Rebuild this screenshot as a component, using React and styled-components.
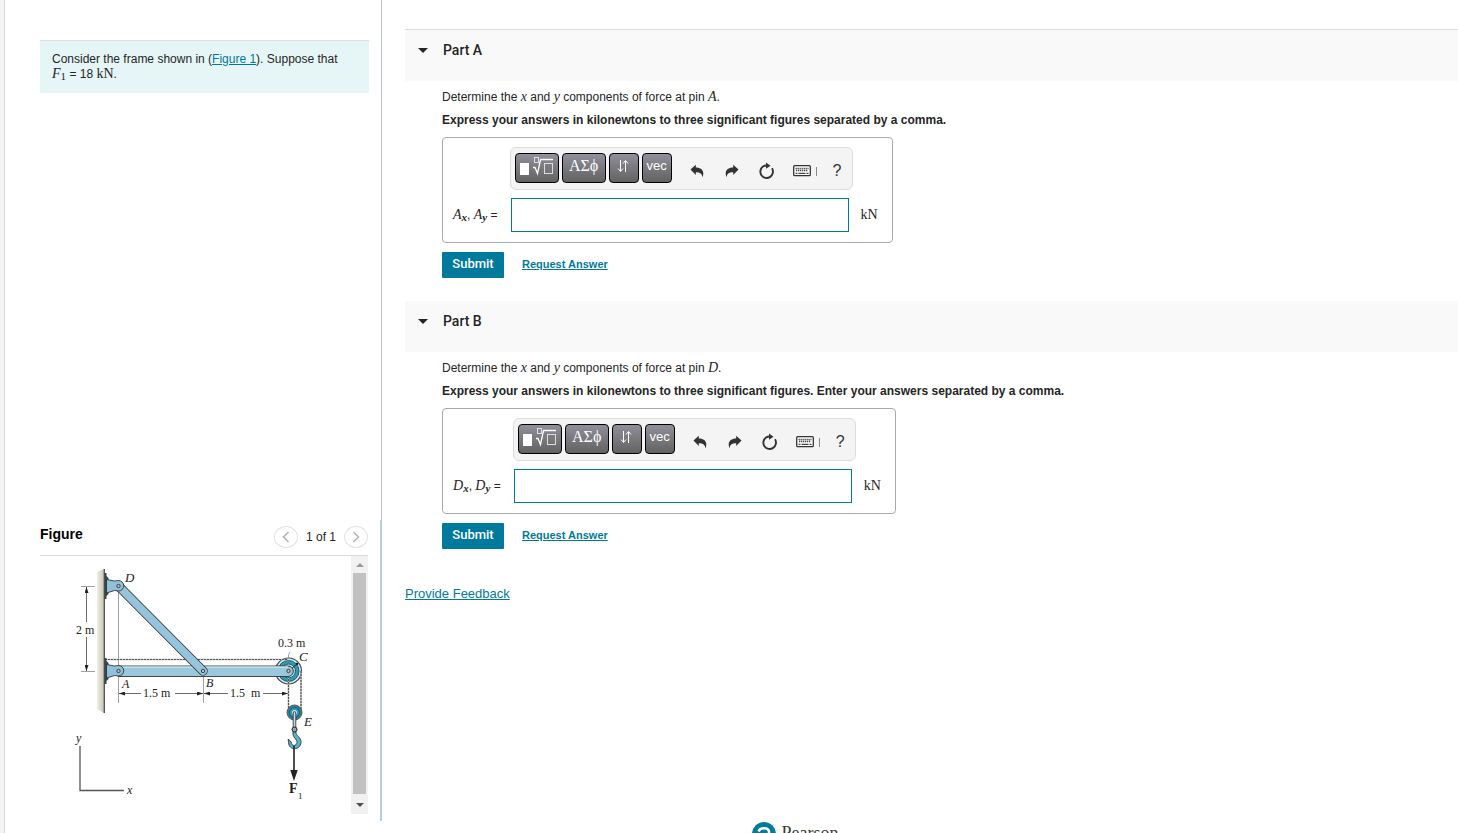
import React, { useState } from "react"
import styled, { createGlobalStyle } from "styled-components"

const GlobalStyle = createGlobalStyle`
  * {
    box-sizing: border-box;
  }
  body {
    margin: 0;
    background: #fff;
    color: #252525;
    font-family: "Liberation Sans", Arial, sans-serif;
    font-size: 12px;
    line-height: 15px;
  }
  a {
    color: #007a9c;
  }
  button {
    font-family: inherit;
    padding: 0;
    cursor: pointer;
  }
`

const Page = styled.div`
  display: flex;
  height: 100vh;
  overflow: hidden;
`

const Rail = styled.div`
  flex: none;
  width: 5px;
  background: #f4f4f4;
  border-right: 1px solid #d9d9d9;
`

const Sidebar = styled.aside`
  display: flex;
  flex-direction: column;
  flex: none;
  width: 377px;
  padding-bottom: 12px;
`

const ProblemPane = styled.div`
  flex: 1;
  padding: 40px 12px 0 35px;
  border-right: 1px solid #bcc3cc;
`

const Problem = styled.div`
  padding: 11px 12px;
  border-top: 1px solid #dcdfdf;
  background: #e6f6f6;
  p {
    margin: 0;
  }
`

const FigurePane = styled.section`
  padding: 6px 12px 7px 35px;
  border-right: 2px solid #b9cde0;
`

const FigureHeader = styled.header`
  display: flex;
  justify-content: space-between;
  padding-bottom: 7px;
  border-bottom: 1px solid #dcdcdc;
  h2 {
    margin: 0;
    color: #000;
    font-size: 14px;
    line-height: 16px;
  }
`

const Pager = styled.div`
  display: flex;
  align-items: center;
  gap: 8px;
`

const PageButton = styled.button`
  display: flex;
  align-items: center;
  justify-content: center;
  width: 24px;
  height: 22px;
  border: 1px solid #e2e2e2;
  border-radius: 50%;
  background: #fff;
`

const FigureBody = styled.div`
  display: flex;
  svg.frame {
    flex: 1;
    min-width: 0;
    height: 258px;
  }
`

const ScrollTrack = styled.div`
  display: flex;
  flex-direction: column;
  align-items: center;
  justify-content: space-between;
  width: 17px;
  padding: 7px 0;
  background: #f1f1f1;
`

const ScrollThumb = styled.div`
  flex: 1;
  width: 13px;
  margin: 6px 0 9px;
  background: #c1c1c1;
`

const Triangle = styled.span`
  border: solid transparent;
  border-width: ${props => (props.$up ? "0 4px 4px" : "4px 4px 0")};
  border-${props => (props.$up ? "bottom" : "top")}-color: ${props => props.$color};
`

const Caret = styled(Triangle)`
  border-width: 5px 5px 0;
`

const Main = styled.main`
  flex: 1;
  min-width: 0;
  padding: 29px 0 0 23px;
`

const Parts = styled.div`
  border-top: 1px solid #dcdcdc;
`

const PartHeader = styled.header`
  height: 51px;
  padding: 12px 13px;
  background: #f9f9f9;
  h2 {
    margin: 0;
    font-size: 14px;
    line-height: 16px;
  }
  button {
    display: flex;
    align-items: center;
    gap: 15px;
    border: 0;
    background: none;
    color: #252525;
    font-family: Roboto, "Liberation Sans", sans-serif;
    font-size: 14px;
    font-weight: 500;
    line-height: 16px;
  }
`

const PartBody = styled.div`
  padding: 9px 24px 23px 37px;
  p {
    margin: 0 0 8px;
  }
  p + p {
    margin-bottom: 9px;
    font-weight: bold;
  }
`

const Sym = styled.i`
  font-family: "Liberation Serif", "Times New Roman", serif;
  font-size: 14px;
  line-height: 1;
  sub {
    font-size: 11px;
    font-weight: bold;
    line-height: 1;
    vertical-align: -2px;
  }
`

const Upright = styled.span`
  font-family: "Liberation Serif", "Times New Roman", serif;
  font-size: 14px;
  line-height: 1;
`

const Subscript = styled.sub`
  font-family: "Liberation Serif", "Times New Roman", serif;
  font-size: 11px;
  line-height: 1;
  vertical-align: -2px;
`

const AnswerBox = styled.div`
  display: grid;
  grid-template-columns: auto auto auto;
  align-items: center;
  width: fit-content;
  padding: 9px 14px 10px 10px;
  border: 1px solid #aaa;
  border-radius: 4px;
  row-gap: 8px;
`

const Toolbar = styled.div`
  grid-column: 2 / 4;
  display: flex;
  gap: 3px;
  justify-self: start;
  width: 343px;
  height: 43px;
  padding: 5px 4px;
  border: 1px solid #ddd;
  border-radius: 6px;
  background: #f4f4f4;
`

const PaletteButton = styled.button`
  flex: none;
  width: ${props => (props.$wide ? 44 : 30)}px;
  height: 30px;
  padding-bottom: 5px;
  border: 1px solid #000;
  border-radius: 4px;
  background: linear-gradient(#918f9a, #626262);
  color: #fff;
  font-family: ${props => (props.$serif ? '"Liberation Serif", serif' : "inherit")};
  font-size: ${props => (props.$serif ? 16 : 13)}px;
  line-height: 18px;
  svg {
    display: block;
    margin: 0 auto;
  }
`

const ToolGroup = styled.div`
  display: flex;
  margin-left: 5px;
`

const ToolButton = styled.button`
  display: flex;
  flex: none;
  align-items: center;
  justify-content: center;
  width: ${props => props.$width || 35}px;
  height: 30px;
  padding-top: 6px;
  border: 0;
  background: none;
  color: #333;
  font-size: 16px;
`

const AnswerLabel = styled.label`
  padding-right: 12px;
`

const AnswerInput = styled.input`
  width: 338px;
  height: 34px;
  margin-left: 1px;
  padding: 0 8px;
  border: 1px solid #007a9c;
  background: #fff;
  font-size: 14px;
`

const Unit = styled(Upright)`
  padding-left: 12px;
`

const Actions = styled.div`
  display: flex;
  align-items: center;
  gap: 18px;
  margin-top: 9px;
  a {
    padding-bottom: 2px;
    font-size: 11px;
    font-weight: bold;
  }
`

const SubmitButton = styled.button`
  width: 62px;
  height: 26px;
  padding-bottom: 3px;
  border: 0;
  border-radius: 1px;
  background: #007a9c;
  color: #fff;
  font-family: Roboto, "Liberation Sans", sans-serif;
  font-size: 13px;
  font-weight: 500;
`

const Feedback = styled.a`
  display: block;
  width: fit-content;
  margin-top: 14px;
  font-size: 13px;
`

const Footer = styled.footer`
  display: flex;
  gap: 5px;
  margin: 221px 0 0 33%;
  color: #3a3a32;
  font-family: "Liberation Serif", "Times New Roman", serif;
  font-size: 18px;
  line-height: 22px;
`

const TemplateIcon = () => (
  <svg width="34" height="20" viewBox="0 0 34 20" fill="none" stroke="#ddd">
    <rect x="0" y="7" width="9" height="12" fill="#fff" stroke="none" />
    <rect x="14.5" y="1.5" width="4" height="5" />
    <path d="M13 11.5h2l2.5 6L20.5 3.5H33" stroke="#fff" strokeWidth="1.3" />
    <rect x="24.5" y="7.5" width="8" height="10" />
  </svg>
)

const UpDownIcon = () => (
  <svg width="14" height="14" viewBox="0 0 14 14" fill="none" stroke="#fff">
    <path d="M3.5 1v11M1 9.5l2.5 3 2.5-3M8.500 13V2M6 4.5l2.5-3 2.5 3" />
  </svg>
)

const ArrowIcon = ({ redo }) => (
  <svg width="14" height="14" viewBox="0 0 14 14" fill="#333">
    <path
      transform={redo ? "matrix(-1 0 0 1 14 0)" : undefined}
      d="M.5 5.500 5.800.8v2.800c4.600 0 7.500 2.200 7.500 6 0 1.500-.4 2.800-1.100 3.700.1-3.400-2-5-6.400-5v2.700z"
    />
  </svg>
)

const ResetIcon = () => (
  <svg width="18" height="18" viewBox="0 0 18 18" fill="none">
    <path d="M14 6.300A6.300 6.300 0 1 1 5 4.500Q7 3.200 9.500 3.500" stroke="#333" strokeWidth="1.900" />
    <path d="M8 .5l4.500 3.200-4.500 3z" fill="#333" />
  </svg>
)

const KeyboardIcon = () => (
  <svg width="25" height="12" viewBox="0 0 25 12">
    <rect x=".7" y=".7" width="16.600" height="10" rx="1" fill="#fff" stroke="#333" strokeWidth="1.300" />
    <path d="M2.500 3.500h13M3 5.500h12" stroke="#444" strokeWidth="1.300" strokeDasharray="1.300 .7" />
    <path d="M2.500 8.300h2M5.500 8.300h7M13.500 8.300h2" stroke="#444" strokeWidth="1.200" />
    <path d="M23.500 2v9" stroke="#888" />
  </svg>
)

const Chevron = ({ right }) => (
  <svg width="8" height="12" viewBox="0 0 8 12" fill="none" stroke="#b5b5b5" strokeWidth="1.600">
    <path d={right ? "M1.500 1l5 5-5 5" : "M6.500 1l-5 5 5 5"} />
  </svg>
)

const PearsonMark = () => (
  <svg width="24" height="24" viewBox="0 0 24 24">
    <circle cx="12" cy="12" r="12" fill="#047a9c" />
    <path d="M6.500 9.500C8 5.500 16.500 5 17 9.800c.3 3.200-3 5-6 4.700" fill="none" stroke="#fff" strokeWidth="2.500" />
    <circle cx="11" cy="19" r="1.500" fill="#fff" />
  </svg>
)

const Bracket = ({ y }) => (
  <g transform={`translate(0 ${y})`}>
    <path d="M104.500-13h2v3l2 2v16l-2 2v3h-2z" fill="#35454d" />
    <path d="M106.500-6.500l8 1.500 4-.5a5 5 0 0 1 0 10.500l-4-.5-8 2.500z" fill="#8fc1da" stroke="#333" strokeWidth=".9" />
  </g>
)

const Pin = ({ x, y }) => (
  <circle cx={x} cy={y} r="1.700" fill="#b9c3c7" stroke="#333" strokeWidth=".9" />
)

const FrameDrawing = () => (
  <svg
    className="frame"
    viewBox="40 556 311 258"
    fontFamily="'Liberation Serif', serif"
    fontSize="12"
    fill="#222"
    role="img"
    aria-label="Frame with pulleys"
  >
    <defs>
      <linearGradient id="wall">
        <stop offset="0" stopColor="#f0efe6" />
        <stop offset="1" stopColor="#c6c5b3" />
      </linearGradient>
      <marker id="tip" viewBox="0 0 6 4" refX="6" refY="2" markerWidth="6" markerHeight="4" markerUnits="userSpaceOnUse" orient="auto">
        <path d="M0 0l6 2-6 2z" />
      </marker>
    </defs>

    {/* wall */}
    <path d="M97 572l7-3v144l-7-4z" fill="url(#wall)" />
    <path d="M104.300 569v144" stroke="#444" strokeWidth="1.200" />

    {/* extension and dimension lines */}
    <g stroke="#888" strokeWidth=".8">
      <path d="M118.500 590v113M203.500 677v26M288.500 684v18M81 586.500h14M81 671.500h14" />
    </g>
    <g stroke="#444" strokeWidth=".8">
      <path d="M86.500 622v-35" markerEnd="url(#tip)" />
      <path d="M86.500 637v34" markerEnd="url(#tip)" />
      <path d="M141 693.500h-22" markerEnd="url(#tip)" />
      <path d="M175 693.500h28" markerEnd="url(#tip)" />
      <path d="M228 693.500h-24" markerEnd="url(#tip)" />
      <path d="M263 693.500h25" markerEnd="url(#tip)" />
    </g>

    {/* upper pulley */}
    <circle cx="288.500" cy="671" r="13" fill="#d5eef5" stroke="#444" strokeWidth="1.200" />
    <circle cx="288.500" cy="671" r="10.500" fill="#2b9dbb" stroke="#235765" />
    <circle cx="288.500" cy="671" r="7" fill="#c4e7f0" stroke="#235765" />
    <circle cx="288.500" cy="671" r="4.500" fill="#4ba8c2" stroke="#222" />
    <path d="M290 670l8-7" stroke="#222" />
    <circle cx="297" cy="664" r="1.200" />
    <path d="M288.500 658v-3l1.500-3" fill="none" stroke="#888" strokeWidth=".8" />

    {/* rope */}
    <g fill="none" stroke="#bbb" strokeWidth="1.500">
      <path d="M105 659.500h183M288.500 676v32M301 671v40" />
      <path d="M105 659.500h183M288.500 676v32M301 671v40" stroke="#555" strokeDasharray="2 1" strokeWidth="1.200" />
    </g>

    {/* beam and brace */}
    <path d="M118 666h170a5 5 0 0 1 0 10.500H118z" fill="#9ac8dd" stroke="#333" strokeWidth=".9" />
    <path d="M118 667h170" stroke="#e6f3f8" />
    <path d="M118.500 586L203 671" stroke="#333" strokeWidth="9.500" strokeLinecap="round" />
    <path d="M118.500 586L203 671" stroke="#94c5dc" strokeWidth="7.800" strokeLinecap="round" />
    <Bracket y={671} />
    <Bracket y={586} />
    <Pin x={118.500} y={586} />
    <Pin x={118.500} y={671} />
    <Pin x={203} y={671} />
    <Pin x={288.500} y={671} />

    {/* lower pulley, hook and load */}
    <circle cx="294.500" cy="712.500" r="7.500" fill="#2f7f95" stroke="#555" />
    <circle cx="294.500" cy="712.500" r="5" fill="#299bb9" stroke="#20576a" />
    <circle cx="294.500" cy="712.500" r="2.500" fill="#d8ecf2" />
    <path d="M294.500 713v15" stroke="#333" strokeWidth="3.500" strokeLinecap="round" />
    <path d="M294.500 713v15" stroke="#c6dbe2" strokeWidth="1.800" strokeLinecap="round" />
    <circle cx="294.500" cy="729.500" r="2.500" fill="#8da7ae" stroke="#222" />
    <path
      d="M293 732h3c-.5 4 5.500 5 5 10.500-.6 8-12 8.500-12.500 0l-.3-3.500 3 3c0 4.500 5.300 4.500 5.800.5.400-3.500-5-5-4-10.500z"
      fill="#58b4ce"
      stroke="#333"
      strokeWidth=".9"
    />
    <path d="M294 746v26" stroke="#222" strokeWidth="1.600" />
    <path d="M290.300 770h7.400l-3.700 11z" />

    {/* axes */}
    <path d="M80 746v44.500h44" fill="none" stroke="#555" strokeWidth="1.300" />

    <text x="76" y="634">2 m</text>
    <text x="143" y="697">1.5 m</text>
    <text x="230" y="697">1.5&#160; m</text>
    <text x="278" y="647">0.3 m</text>
    <g fontStyle="italic">
      <text x="125" y="582" fontSize="13">D</text>
      <text x="122" y="688">A</text>
      <text x="206" y="687">B</text>
      <text x="299" y="661" fontSize="13">C</text>
      <text x="304" y="726" fontSize="13">E</text>
      <text x="76" y="742">y</text>
      <text x="127" y="794">x</text>
    </g>
    <text x="289" y="793" fontSize="14" fontWeight="bold">F</text>
    <text x="298" y="799" fontSize="9">1</text>
  </svg>
)

const parts = [
  {
    title: "Part A",
    pin: "A",
    instructions:
      "Express your answers in kilonewtons to three significant figures separated by a comma.",
  },
  {
    title: "Part B",
    pin: "D",
    instructions:
      "Express your answers in kilonewtons to three significant figures. Enter your answers separated by a comma.",
  },
]

const Part = ({ title, pin, instructions }) => {
  const [answer, setAnswer] = useState("")
  const inputId = `answer-${pin}`
  return (
    <section>
      <PartHeader>
        <h2>
          <button type="button" aria-expanded="true">
            <Caret $color="#252525" />
            {title}
          </button>
        </h2>
      </PartHeader>
      <PartBody>
        <p>
          Determine the <Sym>x</Sym> and <Sym>y</Sym> components of force at pin{" "}
          <Sym>{pin}</Sym>.
        </p>
        <p>{instructions}</p>
        <AnswerBox>
          <Toolbar>
            <PaletteButton type="button" $wide aria-label="Templates">
              <TemplateIcon />
            </PaletteButton>
            <PaletteButton type="button" $wide $serif>
              ΑΣϕ
            </PaletteButton>
            <PaletteButton type="button" aria-label="Arrows">
              <UpDownIcon />
            </PaletteButton>
            <PaletteButton type="button">vec</PaletteButton>
            <ToolGroup>
              <ToolButton type="button" aria-label="Undo">
                <ArrowIcon />
              </ToolButton>
              <ToolButton type="button" aria-label="Redo">
                <ArrowIcon redo />
              </ToolButton>
              <ToolButton type="button" aria-label="Reset">
                <ResetIcon />
              </ToolButton>
              <ToolButton type="button" $width={42} aria-label="Keyboard shortcuts">
                <KeyboardIcon />
              </ToolButton>
              <ToolButton type="button" $width={21}>
                ?
              </ToolButton>
            </ToolGroup>
          </Toolbar>
          <AnswerLabel htmlFor={inputId}>
            <Sym>
              {pin}
              <sub>x</sub>
            </Sym>
            ,{" "}
            <Sym>
              {pin}
              <sub>y</sub>
            </Sym>{" "}
            =
          </AnswerLabel>
          <AnswerInput
            id={inputId}
            value={answer}
            onChange={e => setAnswer(e.target.value)}
          />
          <Unit>kN</Unit>
        </AnswerBox>
        <Actions>
          <SubmitButton type="button">Submit</SubmitButton>
          <a href="#request">Request Answer</a>
        </Actions>
      </PartBody>
    </section>
  )
}

const App = () => (
  <Page>
    <GlobalStyle />
    <Rail />
    <Sidebar>
      <ProblemPane>
        <Problem>
          <p>
            Consider the frame shown in (<a href="#figure">Figure 1</a>). Suppose that
          </p>
          <p>
            <Sym>F</Sym>
            <Subscript>1</Subscript> = 18 <Upright>kN</Upright>.
          </p>
        </Problem>
      </ProblemPane>
      <FigurePane id="figure">
        <FigureHeader>
          <h2>Figure</h2>
          <Pager>
            <PageButton type="button" aria-label="Previous figure">
              <Chevron />
            </PageButton>
            <span>1 of 1</span>
            <PageButton type="button" aria-label="Next figure">
              <Chevron right />
            </PageButton>
          </Pager>
        </FigureHeader>
        <FigureBody>
          <FrameDrawing />
          <ScrollTrack>
            <Triangle $up $color="#999" />
            <ScrollThumb />
            <Triangle $color="#505050" />
          </ScrollTrack>
        </FigureBody>
      </FigurePane>
    </Sidebar>
    <Main>
      <Parts>
        {parts.map(part => (
          <Part key={part.pin} {...part} />
        ))}
      </Parts>
      <Feedback href="#feedback">Provide Feedback</Feedback>
      <Footer>
        <PearsonMark />
        Pearson
      </Footer>
    </Main>
  </Page>
)

export default App
